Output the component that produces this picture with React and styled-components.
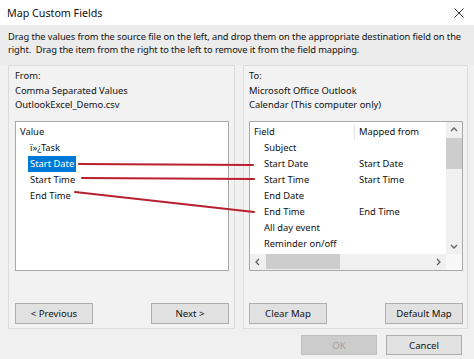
import React from "react";
import styled, { createGlobalStyle } from "styled-components";

const Global = createGlobalStyle`
  html, body { margin: 0; padding: 0; }
  body {
    background: #f0f0f0;
    font-family: "Noto Sans", "Open Sans", sans-serif;
    color: #000;
  }
  #root { width: 474px; height: 359px; overflow: hidden; }
`;

const Dialog = styled.div`
  position: relative;
  width: 474px;
  height: 359px;
  background: #f0f0f0;
  display: flex;
  flex-direction: column;
  overflow: hidden;
`;

const TitleBar = styled.div`
  height: 25px;
  background: #fff;
  display: flex;
  align-items: center;
  justify-content: space-between;
  padding: 0 10px 0 7px;
  box-sizing: border-box;
  font-size: 10.7px;
  color: #111;
`;

const Instructions = styled.div`
  background: #ececec;
  padding: 5px 8px 0;
  height: 40px;
  box-sizing: border-box;
  font-size: 9.3px;
  letter-spacing: -0.08px;
  line-height: 13px;
  color: #111;
  white-space: nowrap;
`;

const Groups = styled.div`
  display: flex;
  gap: 8px;
  padding: 0 0 0 8px;
`;

const Group = styled.div`
  width: ${(p) => p.$w}px;
  height: 264px;
  box-sizing: border-box;
  border: 1px solid #dcdcdc;
  background: #f2f2f2;
  padding: 3px ${(p) => p.$pad}px 0;
  display: flex;
  flex-direction: column;
`;

const Label = styled.div`
  font-size: 9.4px;
  line-height: 14.5px;
  color: #111;
  white-space: nowrap;
`;

const ListBox = styled.div`
  margin-top: 8px;
  width: 214px;
  height: 150px;
  box-sizing: border-box;
  border: 1px solid #a8a8a8;
  background: #fff;
  padding-top: 2px;
  font-size: 9.4px;
`;

const GridList = styled.div`
  margin-top: 8px;
  width: 214px;
  height: 150px;
  box-sizing: border-box;
  border: 1px solid #a8a8a8;
  background: #fff;
  display: grid;
  grid-template-columns: 1fr 16px;
  grid-template-rows: 1fr 16px;
  font-size: 9.4px;
`;

const ListContent = styled.div`
  padding-top: 2px;
  overflow: hidden;
`;

const Row = styled.div`
  height: 16px;
  display: flex;
  align-items: center;
  white-space: nowrap;
`;

const Item = styled.span`
  margin-left: ${(p) => p.$indent}px;
  padding: 0 2px;
  line-height: 16px;
  background: ${(p) => (p.$selected ? "#0078d7" : "transparent")};
  color: ${(p) => (p.$selected ? "#fff" : "#111")};
`;

const Cell = styled.div`
  box-sizing: border-box;
  width: ${(p) => (p.$w ? p.$w + "px" : "auto")};
  padding-left: ${(p) => p.$pl}px;
  color: #111;
  line-height: 16px;
  border-right: ${(p) => (p.$sep ? "1px solid #e5e5e5" : "none")};
`;

const VScroll = styled.div`
  background: #f0f0f0;
  display: flex;
  flex-direction: column;
  align-items: center;
`;

const HScroll = styled.div`
  background: #f0f0f0;
  display: flex;
  align-items: center;
`;

const Corner = styled.div`
  background: #f7f7f7;
`;

const ArrowBox = styled.div`
  width: 16px;
  height: 16px;
  display: flex;
  align-items: center;
  justify-content: center;
  flex: none;
`;

const VThumb = styled.div`
  width: 16px;
  height: 31px;
  background: #cdcdcd;
`;

const HThumb = styled.div`
  height: 15px;
  width: 74px;
  background: #cdcdcd;
`;

const Spacer = styled.div`
  flex: 1;
`;

const ButtonRow = styled.div`
  margin-top: 32px;
  display: flex;
  justify-content: space-between;
  width: 214px;
`;

const Button = styled.div`
  width: ${(p) => p.$w || 78}px;
  height: ${(p) => p.$h || 21}px;
  box-sizing: border-box;
  background: ${(p) => (p.$disabled ? "#cccccc" : "#e1e1e1")};
  border: 1px solid ${(p) => (p.$disabled ? "#bfbfbf" : "#adadad")};
  color: ${(p) => (p.$disabled ? "#a0a0a0" : "#111")};
  display: flex;
  align-items: center;
  justify-content: center;
  font-size: 9.6px;
`;

const Footer = styled.div`
  margin-top: 6px;
  display: flex;
  justify-content: flex-end;
  gap: 9px;
  padding-right: 12px;
`;

const Overlay = styled.svg`
  position: absolute;
  left: 0;
  top: 0;
  pointer-events: none;
`;

const Chevron = ({ dir }) => {
  const d = {
    up: "M2 6 L5 3 L8 6",
    down: "M2 4 L5 7 L8 4",
    left: "M6 2 L3 5 L6 8",
    right: "M4 2 L7 5 L4 8",
  }[dir];
  return (
    <svg width="10" height="10" viewBox="0 0 10 10">
      <path d={d} fill="none" stroke="#606060" strokeWidth="1.3" />
    </svg>
  );
};

const leftItems = ["ï»¿Task", "Start Date", "Start Time", "End Time"];
const rightRows = [
  ["Subject", ""],
  ["Start Date", "Start Date"],
  ["Start Time", "Start Time"],
  ["End Date", ""],
  ["End Time", "End Time"],
  ["All day event", ""],
  ["Reminder on/off", ""],
];

export default function App() {
  return (
    <>
      <Global />
      <Dialog>
        <TitleBar>
          <span>Map Custom Fields</span>
          <svg width="10" height="10" viewBox="0 0 10 10">
            <path d="M0.5 0.5 L9.5 9.5 M9.5 0.5 L0.5 9.5" stroke="#333" strokeWidth="1" />
          </svg>
        </TitleBar>
        <Instructions>
          Drag the values from the source file on the left, and drop them on the appropriate destination field on the
          <br />
          right.&nbsp; Drag the item from the right to the left to remove it from the field mapping.
        </Instructions>
        <Groups>
          <Group $w={227} $pad={6}>
            <Label>From:</Label>
            <Label>Comma Separated Values</Label>
            <Label>OutlookExcel_Demo.csv</Label>
            <ListBox>
              <Row>
                <Item $indent={2}>Value</Item>
              </Row>
              {leftItems.map((t, i) => (
                <Row key={t}>
                  <Item $indent={12} $selected={i === 1}>
                    {t}
                  </Item>
                </Row>
              ))}
            </ListBox>
            <ButtonRow>
              <Button>&lt; Previous</Button>
              <Button>Next &gt;</Button>
            </ButtonRow>
          </Group>
          <Group $w={225} $pad={5}>
            <Label>To:</Label>
            <Label>Microsoft Office Outlook</Label>
            <Label>Calendar (This computer only)</Label>
            <GridList>
              <ListContent>
                <Row>
                  <Cell $w={105} $pl={4} $sep>
                    Field
                  </Cell>
                  <Cell $pl={4}>Mapped from</Cell>
                </Row>
                {rightRows.map(([a, b]) => (
                  <Row key={a}>
                    <Cell $w={105} $pl={14}>
                      {a}
                    </Cell>
                    <Cell $pl={4}>{b}</Cell>
                  </Row>
                ))}
              </ListContent>
              <VScroll>
                <ArrowBox>
                  <Chevron dir="up" />
                </ArrowBox>
                <VThumb />
                <Spacer />
                <ArrowBox>
                  <Chevron dir="down" />
                </ArrowBox>
              </VScroll>
              <HScroll>
                <ArrowBox>
                  <Chevron dir="left" />
                </ArrowBox>
                <HThumb />
                <Spacer />
                <ArrowBox>
                  <Chevron dir="right" />
                </ArrowBox>
              </HScroll>
              <Corner />
            </GridList>
            <ButtonRow>
              <Button>Clear Map</Button>
              <Button>Default Map</Button>
            </ButtonRow>
          </Group>
        </Groups>
        <Footer>
          <Button $w={76} $h={20} $disabled>
            OK
          </Button>
          <Button $w={76} $h={20}>
            Cancel
          </Button>
        </Footer>
        <Overlay width="474" height="359" viewBox="0 0 474 359">
          <g stroke="#b8202f" strokeWidth="2" fill="none" strokeLinecap="round">
            <path d="M79 164 L253 165" />
            <path d="M82 178 L254 179" />
            <path d="M75 192 L254 212" />
          </g>
        </Overlay>
      </Dialog>
    </>
  );
}
